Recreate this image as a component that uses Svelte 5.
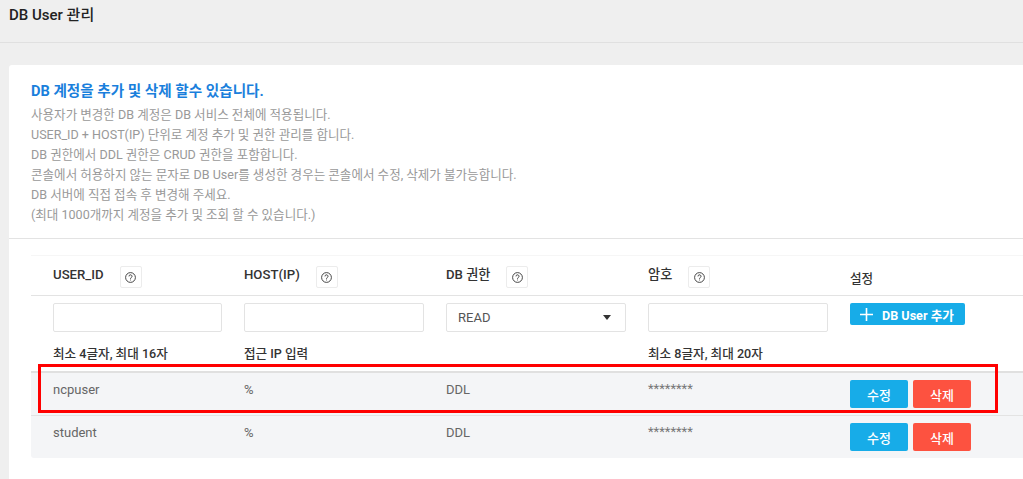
<script>
  const notes = [
    '사용자가 변경한 DB 계정은 DB 서비스 전체에 적용됩니다.',
    'USER_ID + HOST(IP) 단위로 계정 추가 및 권한 관리를 합니다.',
    'DB 권한에서 DDL 권한은 CRUD 권한을 포함합니다.',
    '콘솔에서 허용하지 않는 문자로 DB User를 생성한 경우는 콘솔에서 수정, 삭제가 불가능합니다.',
    'DB 서버에 직접 접속 후 변경해 주세요.',
    '(최대 1000개까지 계정을 추가 및 조회 할 수 있습니다.)'
  ];
  const heads = ['USER_ID', 'HOST(IP)', 'DB 권한', '암호'];
  const users = ['ncpuser', 'student'];
</script>

<div class="page">
  <header class="top"><h1>DB User 관리</h1></header>
  <main class="card">
    <section class="intro">
      <h2>DB 계정을 추가 및 삭제 할수 있습니다.</h2>
      {#each notes as n}<p>{n}</p>{/each}
    </section>
    <section class="body">
      <div class="table">
        <div class="row head">
          {#each heads as h}
            <div class="hcell">
              <span class="hlabel">{h}</span>
              <span class="help">
                <svg width="11" height="11" viewBox="0 0 11 11" fill="none" stroke="#333" stroke-width="0.9">
                  <circle cx="5.5" cy="5.5" r="4.9" />
                  <path d="M4 4.400a1.500 1.500 0 1 1 2.300 1.200c-.5.3-.8.6-.8 1.200" />
                  <path d="M5.500 7.600v.8" />
                </svg>
              </span>
            </div>
          {/each}
          <div class="hcell last"><span>설정</span></div>
        </div>
        <div class="row form">
          <div class="fcell"><div class="input w169"></div></div>
          <div class="fcell"><div class="input w180"></div></div>
          <div class="fcell">
            <div class="input w180 select"><span>READ</span><i class="caret"></i></div>
          </div>
          <div class="fcell"><div class="input w180"></div></div>
          <div class="fcell">
            <button class="add">
              <svg width="13" height="13" viewBox="0 0 13 13" fill="#fff"><path d="M5.700 0h1.600v5.700H13v1.600H7.300V13H5.700V7.300H0V5.700h5.700z" /></svg>
              <span>DB User 추가</span>
            </button>
          </div>
        </div>
        <div class="row hints">
          <div>최소 4글자, 최대 16자</div>
          <div>접근 IP 입력</div>
          <div></div>
          <div>최소 8글자, 최대 20자</div>
          <div></div>
        </div>
        <div class="rows">
          {#each users as u}
            <div class="row data">
              <div>{u}</div>
              <div>%</div>
              <div>DDL</div>
              <div class="stars">********</div>
              <div class="actions">
                <button class="btn blue">수정</button>
                <button class="btn red">삭제</button>
              </div>
            </div>
          {/each}
        </div>
        <div class="mark"></div>
      </div>
    </section>
  </main>
</div>

<style>
  :global(body) {
    margin: 0;
    background: #efefef;
    overflow: hidden;
  }
  .page {
    height: 479px;
    overflow: hidden;
    font-family: Roboto, "Noto Sans CJK KR", sans-serif;
    font-size: 12.6px;
    color: #333;
  }
  .top {
    height: 42px;
    border-bottom: 1px solid #e0e0e0;
    padding-left: 9px;
  }
  h1 {
    margin: 0;
    padding-top: 6px;
    font-size: 15px;
    line-height: 18px;
    font-weight: 500;
    color: #222;
  }
  .card {
    margin: 22px 0 0 9px;
    background: #fff;
    border-radius: 3px 0 0 0;
    height: 420px;
  }
  .intro {
    height: 174px;
    box-sizing: border-box;
    padding: 16px 0 0 22px;
    border-bottom: 1px solid #e3e3e3;
  }
  h2 {
    margin: 0 0 4px;
    font-size: 14.6px;
    line-height: 20px;
    font-weight: 700;
    color: #1a7fdc;
  }
  .intro p {
    margin: 0;
    font-size: 12.55px;
    line-height: 20px;
    color: #999;
  }
  .body {
    padding: 16px 0 0 22px;
  }
  .table {
    position: relative;
  }
  .row {
    display: grid;
    grid-template-columns: 191px 202px 202px 202px 1fr;
    padding-left: 22px;
  }
  .head {
    height: 39px;
    border-top: 1px solid #f6f6f6;
    border-bottom: 1px solid #e3e3e3;
    font-weight: 500;
    color: #333;
  }
  .hcell {
    display: flex;
    gap: 16px;
  }
  .hlabel {
    line-height: 18px;
    padding-top: 10px;
    font-size: 13.2px;
  }
  .help {
    margin-top: 10px;
    width: 20px;
    height: 20px;
    border: 1px solid #ececec;
    border-radius: 2px;
    display: flex;
    align-items: center;
    justify-content: center;
    background: #fff;
  }
  .last span {
    padding-top: 14px;
    line-height: 18px;
  }
  .form {
    padding-top: 7px;
    height: 40px;
  }
  .input {
    height: 27px;
    border: 1px solid #e3e3e3;
    border-radius: 2px;
    background: #fff;
  }
  .w169 { width: 167px; }
  .w180 { width: 178px; }
  .select {
    display: flex;
    align-items: center;
    justify-content: space-between;
    padding: 0 14px 0 11px;
    width: 153px;
    color: #555;
    font-size: 13px;
  }
  .caret {
    width: 0;
    height: 0;
    border-left: 4px solid transparent;
    border-right: 4px solid transparent;
    border-top: 5px solid #333;
  }
  .add {
    display: flex;
    align-items: center;
    gap: 9px;
    width: 115px;
    height: 22px;
    padding: 0 0 0 10px;
    border: 0;
    border-radius: 2px;
    background: #17ace8;
    color: #fff;
    font: 700 12.6px Roboto, "Noto Sans CJK KR", sans-serif;
  }
  .hints {
    height: 28px;
    line-height: 18px;
    padding-top: 2px;
    box-sizing: border-box;
    font-weight: 500;
    color: #333;
  }
  .rows {
    background: #f4f5f7;
    border-top: 2px solid #e0e0e0;
    border-radius: 0 0 0 3px;
  }
  .data {
    height: 42px;
    box-sizing: border-box;
    padding-top: 8px;
    line-height: 18px;
    font-size: 13px;
    color: #666;
  }
  .data + .data {
    height: 43px;
    border-top: 1px solid #e3e3e3;
  }
  .stars {
    color: #777;
    line-height: 16px;
  }
  .actions {
    display: flex;
    gap: 5px;
    margin-top: -1px;
  }
  .btn {
    width: 58px;
    height: 28px;
    padding: 0;
    border: 0;
    border-radius: 2px;
    color: #fff;
    font: 500 13px Roboto, "Noto Sans CJK KR", sans-serif;
  }
  .blue { background: #17ace8; }
  .red { background: #fd5240; }
  .mark {
    position: absolute;
    left: 7px;
    top: 109px;
    width: 954px;
    height: 43px;
    border: 3px solid #f00;
    pointer-events: none;
  }
</style>
